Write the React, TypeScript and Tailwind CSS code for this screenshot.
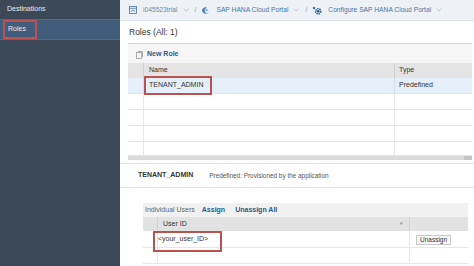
import React from "react";

const font = "font-['Liberation_Sans',Arial,Helvetica,sans-serif]";

function Chevron() {
  return (
    <svg width="6" height="4" viewBox="0 0 6 4" className="ml-[5px] mr-[6px]">
      <path d="M0.5 0.5 L3 3 L5.5 0.5" fill="none" stroke="#b8c4d0" strokeWidth="0.9" />
    </svg>
  );
}

function Sidebar() {
  return (
    <div className="w-[120px] shrink-0 bg-[#3c4959] text-[#e9eef3] text-[7px]">
      <div className="h-[20px] flex items-center pl-[7px] border-b border-[#56697d]">Destinations</div>
      <div className="h-[20px] flex items-center pl-[3px] bg-[#425c7b] border-b border-[#56697d]">
        <span className="h-[19px] w-[34px] flex items-center pl-[3px] border-2 border-[#c0504d]">Roles</span>
      </div>
    </div>
  );
}

function Breadcrumb() {
  return (
    <div className="h-[21px] flex items-center pl-[9px] bg-[#eef2f6] border-b border-[#dde3e9] text-[6.7px] text-[#4774a6]">
      <svg width="8" height="8" viewBox="0 0 8 8" className="mr-[6px]">
        <rect x="0.5" y="0.5" width="7" height="7" fill="none" stroke="#4774a6" strokeWidth="0.8" />
        <path d="M0.5 2.3 H7.5 M2 5.5 L4 4 L6 5.5" fill="none" stroke="#4774a6" strokeWidth="0.8" />
      </svg>
      <span className="text-[#6d88a8]">i045523trial</span>
      <Chevron />
      <span className="text-[#8a9bb0] mr-[5px]">/</span>
      <svg width="9" height="9" viewBox="0 0 9 9" className="mr-[6px]">
        <path d="M1 5 C1 2 4 0.5 6 1.5 C4 2 3 4 4 6 C5 8 8 7 8 5 C8 8 3 9 1 5 Z" fill="#3f7cc0" />
        <circle cx="5.5" cy="4" r="1.2" fill="#7fb1e0" />
      </svg>
      <span>SAP HANA Cloud Portal</span>
      <Chevron />
      <span className="text-[#8a9bb0] mr-[5px]">/</span>
      <svg width="10" height="9" viewBox="0 0 10 9" className="mr-[6px]">
        <circle cx="2" cy="2" r="1.3" fill="#3f7cc0" />
        <circle cx="6.2" cy="5.3" r="2.6" fill="none" stroke="#2b5f94" strokeWidth="1.6" strokeDasharray="1.4 0.8" />
        <circle cx="6.2" cy="5.3" r="1.4" fill="#2b5f94" />
      </svg>
      <span>Configure SAP HANA Cloud Portal</span>
      <Chevron />
    </div>
  );
}

function RolesTable() {
  const empty = [16, 16, 16, 14];
  return (
    <div className="ml-[8px] border-t border-[#d6d6d6]">
      <div className="h-[19px] flex items-center pl-[8px] pt-[2px] bg-[#f6f6f6] text-[7px] font-bold text-[#2c5b8e]">
        <svg width="7" height="8" viewBox="0 0 7 8" className="mr-[4px]">
          <rect x="0.5" y="1.5" width="5" height="6" fill="none" stroke="#9a9a9a" strokeWidth="0.8" />
          <path d="M2 0.5 H6.5 V6" fill="none" stroke="#9a9a9a" strokeWidth="0.8" />
        </svg>
        New Role
      </div>
      <div className="flex h-[15px] bg-[#e4e4e4] text-[7px] text-[#333]">
        <div className="w-[16px] border-r border-[#d0d0d0]" />
        <div className="w-[251px] flex items-center pl-[5px] border-r border-[#d0d0d0]">Name</div>
        <div className="flex-1 flex items-center pl-[4px]">Type</div>
      </div>
      <div className="flex h-[16px] bg-[#e4eff9] text-[7px] text-[#333] border-b border-[#e2e2e2]">
        <div className="w-[16px] border-r border-[#dcdcdc]" />
        <div className="relative w-[251px] flex items-center pl-[5px] border-r border-[#dcdcdc]">
          TENANT_ADMIN
          <div className="absolute left-0 top-[-2px] w-[68px] h-[19px] border-2 border-[#b9534f]" />
        </div>
        <div className="flex-1 flex items-center pl-[4px]">Predefined</div>
      </div>
      {empty.map((h, i) => (
        <div key={i} className={`flex bg-white border-b border-[#e6e6e6] ${h === 16 ? "h-[16px]" : "h-[14px]"}`}>
          <div className="w-[16px] border-r border-[#e6e6e6]" />
          <div className="w-[251px] border-r border-[#e6e6e6]" />
          <div className="flex-1" />
        </div>
      ))}
      <div className="h-[4px] bg-[#dadada] flex justify-end">
        <div className="w-[8px] bg-[#c4c4c4]" />
      </div>
    </div>
  );
}

function Details() {
  return (
    <div className="mt-[3px] border-t border-[#e2e2e2]">
      <div className="h-[24px] flex items-center pl-[18px] text-[7px] border-b border-[#e2e2e2]">
        <span className="font-bold text-[#333]">TENANT_ADMIN</span>
        <span className="ml-[16px] text-[6.4px] text-[#555]">Predefined: Provisioned by the application</span>
      </div>
      <div className="ml-[23px] mr-[6px] mt-[15px] text-[7px]">
        <div className="h-[14px] flex items-center pl-[2px] bg-[#f1f1f1]">
          <span className="text-[#666]">Individual Users</span>
          <span className="ml-[7px] font-bold text-[#2c5b8e]">Assign</span>
          <span className="ml-[10px] font-bold text-[#2c5b8e]">Unassign All</span>
        </div>
        <div className="flex h-[14px] bg-[#e2e2e2] text-[#333]">
          <div className="w-[15px] border-r border-[#d2d2d2]" />
          <div className="w-[252px] flex items-center justify-between pl-[5px] pr-[6px] border-r border-[#d2d2d2]">
            <span>User ID</span>
            <span className="text-[5px] text-[#888]">▾</span>
          </div>
          <div className="flex-1" />
        </div>
        <div className="flex h-[17px] bg-white border-b border-[#e6e6e6] text-[#333]">
          <div className="w-[15px] border-r border-[#e6e6e6]" />
          <div className="relative w-[252px] flex items-center border-r border-[#e6e6e6]">
            &lt;your_user_ID&gt;
            <div className="absolute left-[-5px] top-0 w-[69px] h-[21px] border-2 border-[#b9534f]" />
          </div>
          <div className="flex-1 flex items-center pl-[6px] pt-[2px]">
            <span className="h-[10px] px-[3px] flex items-center bg-[#f8f8f8] border border-[#c8c8c8] text-[6.5px] text-[#333]">Unassign</span>
          </div>
        </div>
        <div className="flex h-[16px] bg-white border-b border-[#e6e6e6]">
          <div className="w-[15px] border-r border-[#e6e6e6]" />
          <div className="w-[252px] border-r border-[#e6e6e6]" />
          <div className="flex-1" />
        </div>
      </div>
    </div>
  );
}

export default function App() {
  return (
    <div className={`${font} w-[474px] h-[266px] overflow-hidden flex bg-white`}>
      <Sidebar />
      <div className="flex-1 min-w-0 flex flex-col">
        <Breadcrumb />
        <div className="h-[22px] flex items-center pl-[9px] text-[8.5px] text-[#333]">Roles (All: 1)</div>
        <div className="pr-[2px]">
          <RolesTable />
        </div>
        <Details />
      </div>
    </div>
  );
}
